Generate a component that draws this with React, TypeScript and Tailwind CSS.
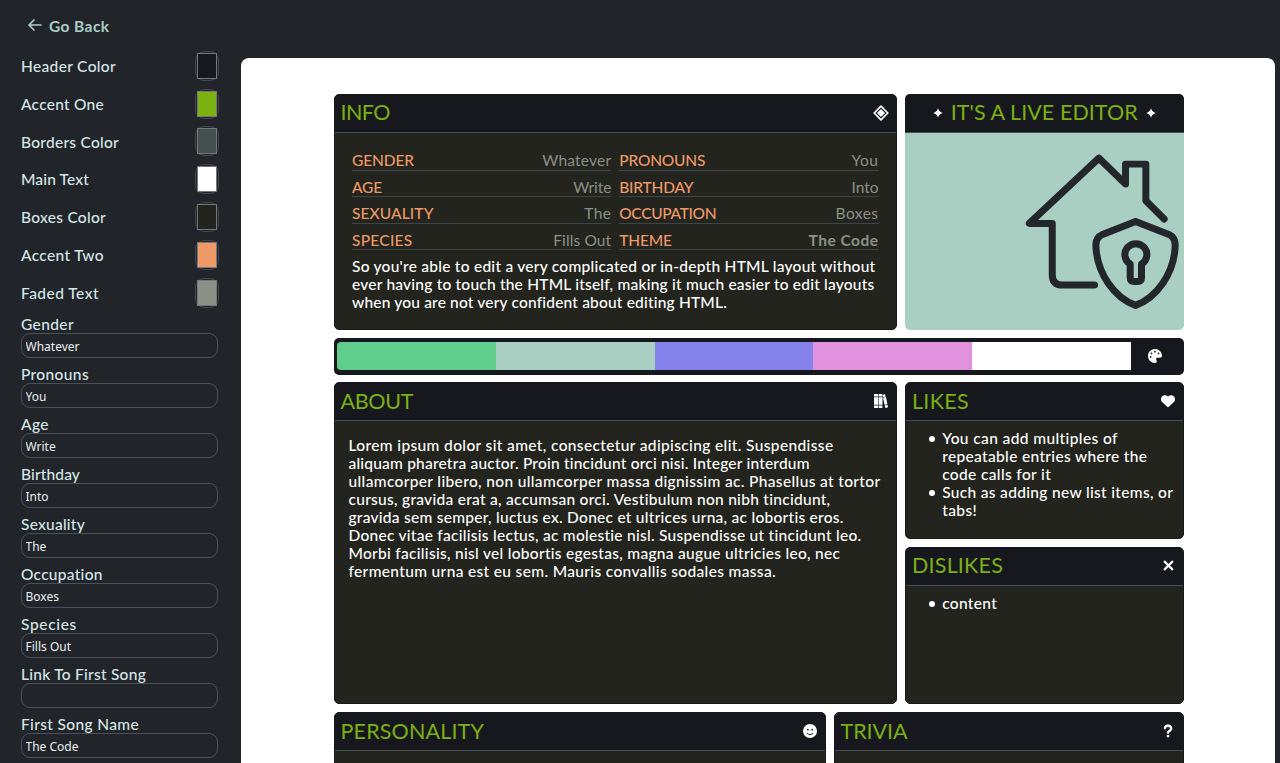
import { useLayoutEffect, useRef, useState } from "react";
import type { ReactNode } from "react";
import { FaFaceSmile, FaHeart, FaPalette, FaQuestion, FaXmark } from "react-icons/fa6";

// A single line of text, tracked so that it fills the given width.
function Line({ w, className = "", children }: { w: number; className?: string; children: string }) {
  const ref = useRef<HTMLSpanElement>(null);
  const [spacing, setSpacing] = useState(0);
  useLayoutEffect(() => {
    if (ref.current) {
      setSpacing((w - ref.current.getBoundingClientRect().width) / children.length);
    }
  }, [w, children]);
  return (
    <span
      ref={ref}
      className={`inline-block whitespace-nowrap ${className}`}
      style={{ letterSpacing: `${spacing}px` }}
    >
      {children}
    </span>
  );
}

const colors = [
  { label: "Header Color", w: 95, swatch: "bg-[#17181e]" },
  { label: "Accent One", w: 83, swatch: "bg-[#7bb112]" },
  { label: "Borders Color", w: 98, swatch: "bg-[#444f50]" },
  { label: "Main Text", w: 68, swatch: "bg-white" },
  { label: "Boxes Color", w: 85, swatch: "bg-[#23241d]" },
  { label: "Accent Two", w: 83, swatch: "bg-[#ed9968]" },
  { label: "Faded Text", w: 78, swatch: "bg-[#8c9086]" },
];

const fields = [
  { label: "Gender", w: 53, value: "Whatever" },
  { label: "Pronouns", w: 68, value: "You" },
  { label: "Age", w: 28, value: "Write" },
  { label: "Birthday", w: 59, value: "Into" },
  { label: "Sexuality", w: 64, value: "The" },
  { label: "Occupation", w: 82, value: "Boxes" },
  { label: "Species", w: 56, value: "Fills Out" },
  { label: "Link To First Song", w: 125, value: "" },
  { label: "First Song Name", w: 118, value: "The Code" },
];

const facts = [
  { label: "GENDER", lw: 62, value: "Whatever", vw: 69 },
  { label: "PRONOUNS", lw: 86, value: "You", vw: 27 },
  { label: "AGE", lw: 30, value: "Write", vw: 38 },
  { label: "BIRTHDAY", lw: 74, value: "Into", vw: 27 },
  { label: "SEXUALITY", lw: 81.5, value: "The", vw: 27 },
  { label: "OCCUPATION", lw: 97, value: "Boxes", vw: 43 },
  { label: "SPECIES", lw: 60.5, value: "Fills Out", vw: 58 },
  { label: "THEME", lw: 52.5, value: "The Code", vw: 70, bold: true },
];

const infoText: [string, number][] = [
  ["So you're able to edit a very complicated or in-depth HTML layout without", 523.5],
  ["ever having to touch the HTML itself, making it much easier to edit layouts", 522.5],
  ["when you are not very confident about editing HTML.", 375],
];

const aboutText: [string, number][] = [
  ["Lorem ipsum dolor sit amet, consectetur adipiscing elit. Suspendisse", 485],
  ["aliquam pharetra auctor. Proin tincidunt orci nisi. Integer interdum", 461.5],
  ["ullamcorper libero, non ullamcorper massa dignissim ac. Phasellus at tortor", 532],
  ["cursus, gravida erat a, accumsan orci. Vestibulum non nibh tincidunt,", 482.5],
  ["gravida sem semper, luctus ex. Donec et ultrices urna, ac lobortis eros.", 495.5],
  ["Donec vitae facilisis lectus, ac molestie nisl. Suspendisse ut tincidunt leo.", 513.5],
  ["Morbi facilisis, nisl vel lobortis egestas, magna augue ultricies leo, nec", 492],
  ["fermentum urna est eu sem. Mauris convallis sodales massa.", 427.5],
];

function Lines({ lines }: { lines: [string, number][] }) {
  return (
    <div className="flex flex-col items-start text-[15.5px] leading-[18px] font-medium text-white">
      {lines.map(([text, w]) => (
        <Line key={text} w={w}>{text}</Line>
      ))}
    </div>
  );
}

function Item({ lines }: { lines: [string, number][] }) {
  return (
    <li className="flex gap-[7px]">
      <span className="mt-[7px] size-[6px] shrink-0 rounded-full bg-white" />
      <Lines lines={lines} />
    </li>
  );
}

function Card({ title, w, icon, className = "", children }: {
  title: string; w: number; icon: ReactNode; className?: string; children?: ReactNode;
}) {
  return (
    <section className={`flex flex-col overflow-hidden rounded-[5px] border border-[#17181e] bg-[#23241d] ${className}`}>
      <header className="flex h-[38px] shrink-0 items-center justify-between border-b border-[#444f50] bg-[#17181e] pr-[8px] pb-px pl-[6px] text-white">
        <h2 className="pb-px text-[21.5px] leading-[26px] text-[#7bb112]"><Line w={w}>{title}</Line></h2>
        {icon}
      </header>
      {children}
    </section>
  );
}

function DiamondIcon() {
  return (
    <svg viewBox="0 0 16 16" className="-mr-px size-4">
      <path d="M8 1.2 14.8 8 8 14.8 1.2 8Z" fill="none" stroke="currentColor" strokeWidth="1.7" strokeLinejoin="round" />
      <path d="M8 3.900 12.100 8 8 12.100 3.900 8Z" fill="currentColor" />
    </svg>
  );
}

function BooksIcon() {
  return (
    <svg viewBox="0 0 14 14" className="h-[14px] w-[14px]" fill="currentColor">
      <path d="M0 .8Q0 0 .8 0H3.400Q4.200 0 4.200 .8V2.600H0ZM0 3.200H4.200V10.800H0ZM0 11.400H4.200V13.200Q4.200 14 3.400 14H.8Q0 14 0 13.200Z" />
      <path d="M4.700 .8Q4.700 0 5.500 0H7.700Q8.500 0 8.500 .8V2.600H4.700ZM4.700 3.200H8.500V10.800H4.700ZM4.700 11.400H8.500V13.200Q8.500 14 7.700 14H5.500Q4.700 14 4.700 13.200Z" />
      <path d="M8.700 .9 10.400 .2Q11 0 11.300 .7L11.700 2.400 8.900 3.200ZM9.100 3.800 11.900 3 13.400 10.100 10.600 10.900ZM10.800 11.500 13.500 10.700 13.900 12.400Q14.100 13.200 13.300 13.500L12 13.900Q11.300 14 11.100 13.300Z" />
    </svg>
  );
}

function Sparkle() {
  return (
    <svg viewBox="0 0 10 10" className="size-[10px] text-white" fill="currentColor">
      <path d="M5 .3Q6 4 9.700 5 6 6 5 9.700 4 6 .3 5 4 4 5 .3Z" />
    </svg>
  );
}

function HouseArt() {
  return (
    <svg viewBox="15 144 836 592" className="h-full w-full" fill="none" stroke="#23262b" strokeWidth="21" strokeLinecap="round" strokeLinejoin="round">
      <path d="M793 402 738 347V237H677V297L597 219 388 415H457V568Q457 600 488 600H584" />
      <path d="M707 409 608 448Q588 457 588 480C590 565 644 638 707 661C770 638 824 565 826 480Q826 457 807 448Z" />
      <path d="M691 537A33 33 0 1 1 725 537V577Q725 589 713 589H703Q691 589 691 577Z" />
    </svg>
  );
}

export default function App() {
  return (
    <div className="flex h-[763px] w-[1280px] overflow-hidden bg-[#212529] font-['Lato',sans-serif]">
      <aside className="flex w-[240.5px] shrink-0 flex-col pt-[15px] pr-[22px] pl-[21px] text-[15.5px] font-medium text-[#d6e5e8]">
        <a className="flex h-[22px] items-center gap-[7px] pl-[7px] font-bold text-[#a8cfc2]">
          <svg viewBox="0 0 14 12" className="-mt-[3px] h-3 w-[14px]" fill="none" stroke="currentColor" strokeWidth="1.7" strokeLinecap="round" strokeLinejoin="round">
            <path d="M13 6H1M6 1 1 6 6 11" />
          </svg>
          <Line w={60.5} className="pt-[2px]">Go Back</Line>
        </a>
        <div className="mt-[10px] flex flex-col">
          {colors.map((c) => (
            <div key={c.label} className="flex h-[37.8px] items-center justify-between">
              <Line w={c.w} className="pt-[1.5px]">{c.label}</Line>
              <span className="flex h-[30px] w-[24px] items-center justify-center rounded-[9px] border border-[#43474b]">
                <span className={`h-[26px] w-5 border border-[#777777] ${c.swatch}`} />
              </span>
            </div>
          ))}
        </div>
        <div className="mt-[3.4px] flex flex-col gap-[7px]">
          {fields.map((f) => (
            <label key={f.label} className="flex flex-col items-start">
              <span className="flex h-[18px] items-center"><Line w={f.w} className="pt-[2px]">{f.label}</Line></span>
              <input
                defaultValue={f.value}
                className="h-[25px] w-[197px] rounded-[9px] border border-[#495057] bg-transparent px-[3.5px] pt-[2px] font-['Noto_Sans',sans-serif] text-[12px] font-normal text-[#e9f0f2]"
              />
            </label>
          ))}
        </div>
      </aside>

      <main className="mt-[58px] h-[760px] w-[1034.5px] shrink-0 rounded-t-[8px] bg-white pt-[35.5px] pl-[93px]">
        <div className="flex w-[850px] flex-col">
          <div className="flex h-[236.5px] gap-[8px]">
            <Card title="INFO" w={49.5} icon={<DiamondIcon />} className="w-[563.5px]">
              <div className="flex flex-col px-[17.5px] pt-[12px]">
                <div className="grid grid-cols-2 gap-x-[8px]">
                  {facts.map((f) => (
                    <div key={f.label} className="flex h-[26.4px] items-end justify-between border-b border-[#3c4648] pb-[0.5px] text-[15.5px] leading-[18px]">
                      <Line w={f.lw} className="font-medium text-[#ed9968]">{f.label}</Line>
                      <Line w={f.vw} className={f.bold ? "font-bold text-[#8c9086]" : "text-[#8c9086]"}>{f.value}</Line>
                    </div>
                  ))}
                </div>
                <div className="mt-[7px]"><Lines lines={infoText} /></div>
              </div>
            </Card>
            <section className="flex flex-1 flex-col overflow-hidden rounded-[5px] bg-[#a8cfc2]">
              <header className="flex h-[39px] shrink-0 items-center justify-center gap-[8px] border-b border-[#444f50] bg-[#17181e]">
                <Sparkle />
                <h2 className="pb-[2px] text-[21.5px] leading-[26px] text-[#7bb112]"><Line w={187}>IT'S A LIVE EDITOR</Line></h2>
                <Sparkle />
              </header>
              <div className="min-h-0 flex-1"><HouseArt /></div>
            </section>
          </div>

          <div className="mt-[8px] flex h-[37px] items-start rounded-[5px] bg-[#17181e] pt-[4px] pl-[3.5px] text-white">
            <div className="flex h-[28px] w-[794px] overflow-hidden rounded-l-[4px]">
              <span className="flex-1 bg-[#60cd8d]" />
              <span className="flex-1 bg-[#a8cfc2]" />
              <span className="flex-1 bg-[#8583eb]" />
              <span className="flex-1 bg-[#e092de]" />
              <span className="flex-1 bg-white" />
            </div>
            <FaPalette className="mt-[7px] ml-[17px] size-[14px]" />
          </div>

          <div className="mt-[7.3px] flex h-[322.2px] gap-[8px]">
            <Card title="ABOUT" w={72.5} icon={<BooksIcon />} className="w-[563.5px]">
              <div className="pt-[14.5px] pl-[14px]"><Lines lines={aboutText} /></div>
            </Card>
            <div className="flex flex-1 flex-col gap-[8px]">
              <Card title="LIKES" w={57} icon={<FaHeart className="size-[14px]" />} className="h-[156.7px]">
                <ul className="pt-[8px] pl-[23.2px]">
                  <Item lines={[["You can add multiples of", 176], ["repeatable entries where the", 205], ["code calls for it", 109]]} />
                  <Item lines={[["Such as adding new list items, or", 231], ["tabs!", 35]]} />
                </ul>
              </Card>
              <Card title="DISLIKES" w={91} icon={<FaXmark className="-mr-px size-[15px]" stroke="currentColor" strokeWidth={16} />} className="h-[157.5px]">
                <ul className="pt-[8px] pl-[23.2px]">
                  <Item lines={[["content", 55]]} />
                </ul>
              </Card>
            </div>
          </div>

          <div className="mt-[7.7px] flex h-[150px] gap-[8px]">
            <Card title="PERSONALITY" w={143.5} icon={<FaFaceSmile className="size-[14px]" />} className="w-[492px]" />
            <Card title="TRIVIA" w={67} icon={<FaQuestion className="size-[14px] stroke-current stroke-[24px]" />} className="flex-1" />
          </div>
        </div>
      </main>
    </div>
  );
}
